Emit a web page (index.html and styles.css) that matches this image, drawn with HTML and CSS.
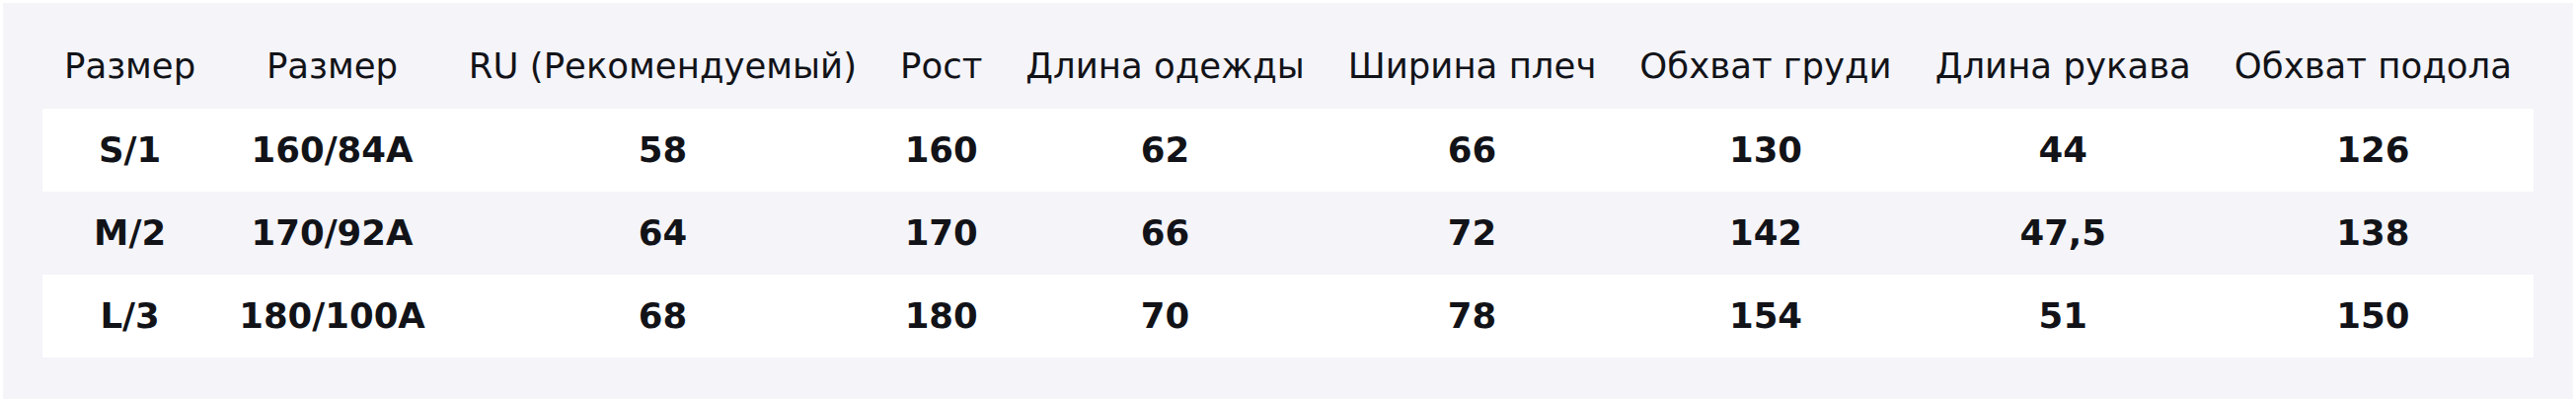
FILE: index.html
```html
<!DOCTYPE html>
<html lang="ru">
<head>
<meta charset="utf-8">
<title>Таблица размеров</title>
<link rel="stylesheet" href="styles.css">
</head>
<body>
<div class="size-chart">
  <table class="size-table">
    <thead>
      <tr>
        <th>Размер</th>
        <th>Размер</th>
        <th>RU (Рекомендуемый)</th>
        <th>Рост</th>
        <th>Длина одежды</th>
        <th>Ширина плеч</th>
        <th>Обхват груди</th>
        <th>Длина рукава</th>
        <th>Обхват подола</th>
      </tr>
    </thead>
    <tbody>
      <tr class="row-light">
        <td>S/1</td><td>160/84A</td><td>58</td><td>160</td><td>62</td><td>66</td><td>130</td><td>44</td><td>126</td>
      </tr>
      <tr class="row-tint">
        <td>M/2</td><td>170/92A</td><td>64</td><td>170</td><td>66</td><td>72</td><td>142</td><td>47,5</td><td>138</td>
      </tr>
      <tr class="row-light">
        <td>L/3</td><td>180/100A</td><td>68</td><td>180</td><td>70</td><td>78</td><td>154</td><td>51</td><td>150</td>
      </tr>
    </tbody>
  </table>
</div>
</body>
</html>
```

FILE: styles.css
```css
html, body {
  background: #ffffff;
}
body {
  margin: 3px;
  font-family: "DejaVu Sans", "Noto Sans", sans-serif;
  color: #121318;
}
.size-chart {
  background: #f4f4f9;
  padding: 22.7px 40px 42px;
}
.size-table {
  width: 100%;
  border-collapse: collapse;
  border-spacing: 0;
  font-size: 35.5px;
}
.size-table th,
.size-table td {
  padding: 21.5px 22px;
  text-align: center;
  white-space: nowrap;
  line-height: normal;
}
.size-table th {
  font-weight: normal;
  padding-top: 20.7px;
  padding-bottom: 22.3px;
}
.size-table td {
  font-weight: bold;
}
.row-light {
  background: #ffffff;
}
.row-tint {
  background: #f4f4f9;
}
```
